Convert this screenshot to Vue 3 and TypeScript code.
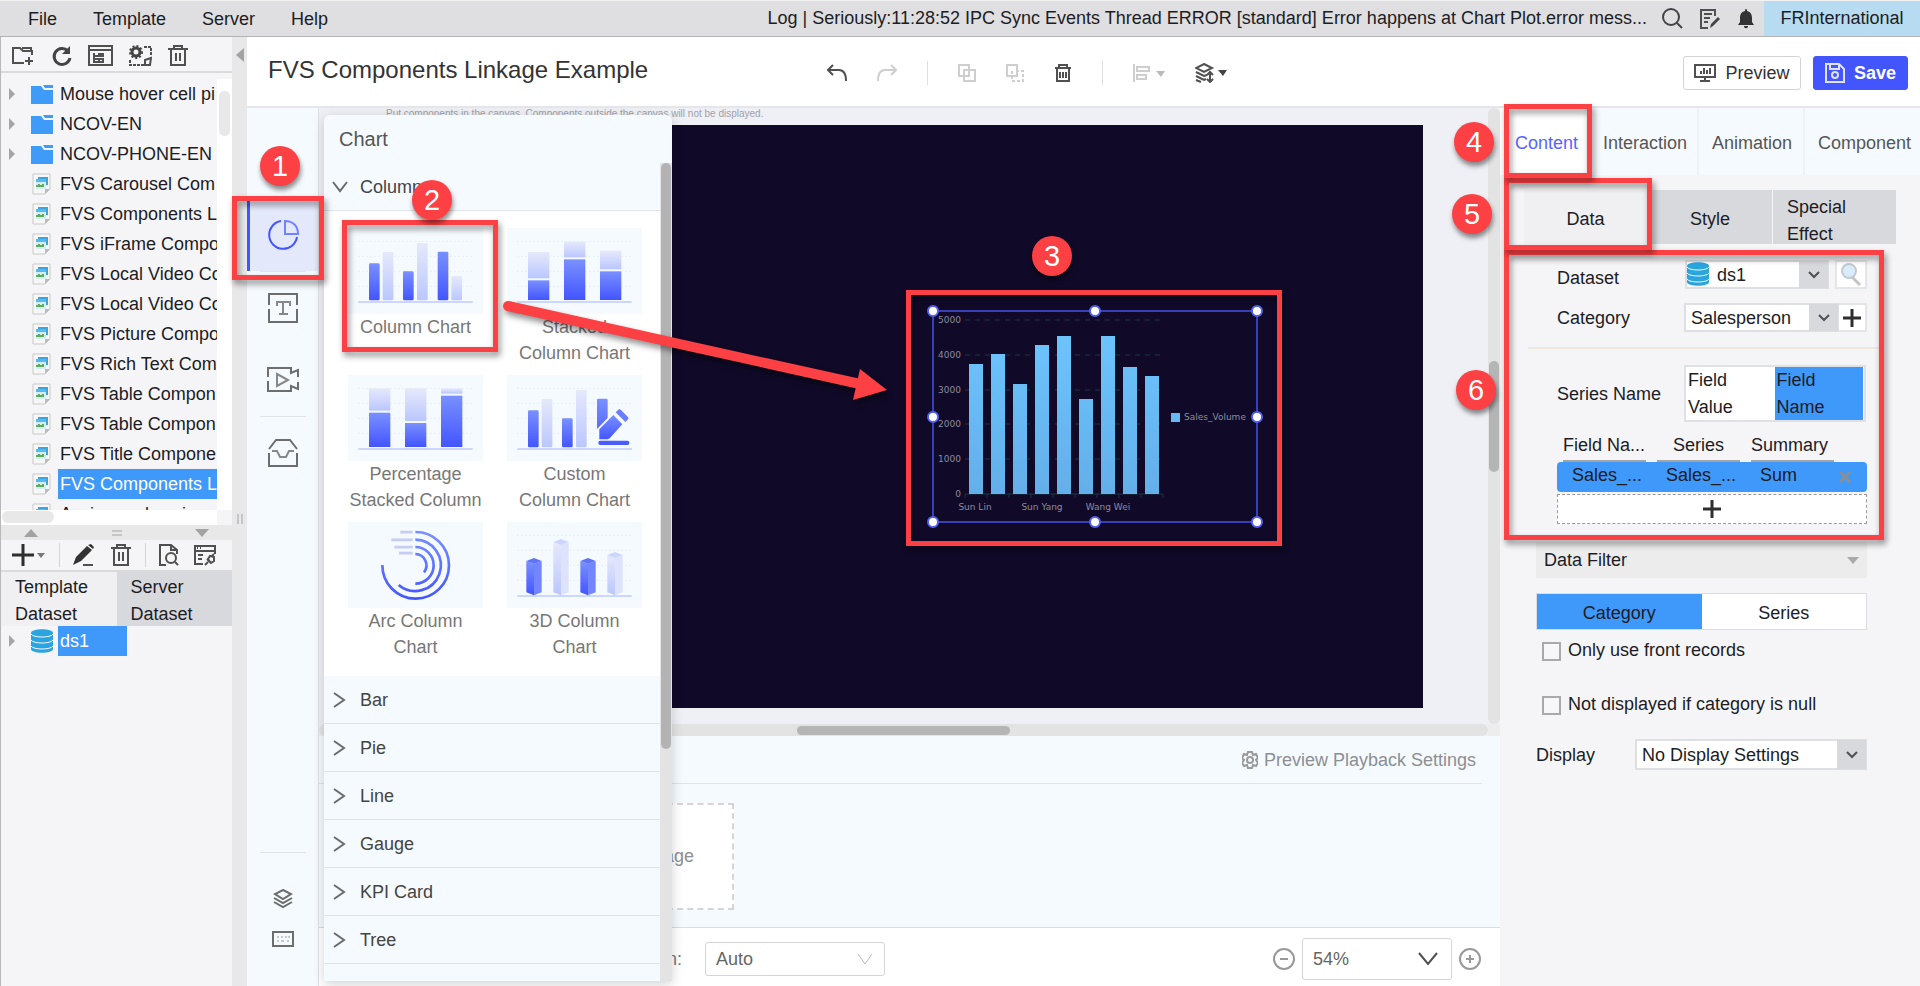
<script setup lang="ts">
import { ref } from 'vue'

const menus = ['File', 'Template', 'Server', 'Help']

interface TreeRow { label: string; folder?: boolean; active?: boolean }
const tree: TreeRow[] = [
  { label: 'Mouse hover cell pi', folder: true },
  { label: 'NCOV-EN', folder: true },
  { label: 'NCOV-PHONE-EN', folder: true },
  { label: 'FVS Carousel Com' },
  { label: 'FVS Components L' },
  { label: 'FVS iFrame Compo' },
  { label: 'FVS Local Video Co' },
  { label: 'FVS Local Video Co' },
  { label: 'FVS Picture Compo' },
  { label: 'FVS Rich Text Com' },
  { label: 'FVS Table Compon' },
  { label: 'FVS Table Compon' },
  { label: 'FVS Title Compone' },
  { label: 'FVS Components L', active: true },
  { label: 'Assign and assign' },
]

const groups = ['Bar', 'Pie', 'Line', 'Gauge', 'KPI Card', 'Tree']
const cards = [
  { id: 'column', label: 'Column Chart' },
  { id: 'stacked', label: 'Stacked\nColumn Chart' },
  { id: 'percent', label: 'Percentage\nStacked Column' },
  { id: 'custom', label: 'Custom\nColumn Chart' },
  { id: 'arc', label: 'Arc Column\nChart' },
  { id: 'solid', label: '3D Column\nChart' },
]

interface ThumbBar { x: number; y: number; h: number; w: number; light: boolean }
const single = (x: number, y: number, light: boolean): ThumbBar => ({ x, y, h: 217 - y, w: 32, light })
const stack = (x: number, top: number, split: number): ThumbBar[] => [
  { x, y: top, h: split - top, w: 64, light: true },
  { x, y: split + 6, h: 210 - split, w: 64, light: false },
]
const thumbBars: Record<string, ThumbBar[]> = {
  column: [single(63, 106, false), single(104, 72, true), single(165, 130, false), single(207, 45, true), single(269, 71, false), single(310, 144, true)],
  stacked: [...stack(63, 72, 151), ...stack(171, 41, 88), ...stack(279, 68, 124)],
  percent: [...stack(63, 40, 107), ...stack(171, 40, 138), ...stack(279, 40, 56)],
  custom: [single(63, 106, false), single(104, 72, true), single(165, 130, false), single(207, 45, true), single(270, 71, false)],
  arc: [],
  solid: [],
}
const prisms = [
  { x: 81, y: 108, light: false },
  { x: 162, y: 51, light: true },
  { x: 243, y: 108, light: false },
  { x: 324, y: 90, light: true },
]

const plotTop = 9
const plotBottom = 183
const yOf = (v: number) => Math.round(plotBottom - (v / 5000) * (plotBottom - plotTop))
const ticks = [0, 1000, 2000, 3000, 4000, 5000]
const sales = [3750, 4010, 3150, 4270, 4530, 2720, 4550, 3655, 3405]
const names = [
  { label: 'Sun Lin', x: 42 },
  { label: 'Sun Yang', x: 109 },
  { label: 'Wang Wei', x: 175 },
]
const handles = [[0, 0], [162, 0], [324, 0], [0, 106], [324, 106], [0, 211], [162, 211], [324, 211]]

const tabs = ['Content', 'Interaction', 'Animation', 'Component']
const subTabs = ['Data', 'Style', 'Special Effect']
const frontOnly = ref(false)
const hideNull = ref(false)
</script>

<template>
  <div class="app">
    <svg class="defs" width="0" height="0" aria-hidden="true">
      <defs>
        <linearGradient id="gDark" x1="0" y1="0" x2="0" y2="1"><stop offset="0" stop-color="#7a90ff" /><stop offset="1" stop-color="#4355ff" /></linearGradient>
        <linearGradient id="gLight" x1="0" y1="0" x2="0" y2="1"><stop offset="0" stop-color="#e6e9fa" /><stop offset="1" stop-color="#bac7ff" /></linearGradient>
        <linearGradient id="gArc" gradientUnits="userSpaceOnUse" x1="0" y1="28" x2="0" y2="232"><stop offset="0" stop-color="#7a90ff" /><stop offset="1" stop-color="#4355ff" /></linearGradient>
        <linearGradient id="gBar" gradientUnits="userSpaceOnUse" x1="0" y1="9" x2="0" y2="183"><stop offset="0" stop-color="#6dc6ff" /><stop offset="1" stop-color="#63afea" /></linearGradient>
      </defs>
    </svg>

    <header class="menubar">
      <nav class="menus"><button v-for="m in menus" :key="m" type="button">{{ m }}</button></nav>
      <p class="log">Log | Seriously:11:28:52 IPC Sync Events Thread ERROR [standard] Error happens at Chart Plot.error mess...</p>
      <div class="status">
        <button type="button" aria-label="Search"><svg width="22" height="22" viewBox="0 0 22 22"><circle cx="10" cy="9" r="8" class="s" /><path d="M16 15l5 5" class="s" /></svg></button>
        <button type="button" aria-label="Notes"><svg width="22" height="22" viewBox="0 0 22 22"><path d="M9 20H2V2h14v6M5 6h8M5 10h6M5 14h4" class="s2" /><path d="M11 20l1-4 7-7 2 2-7 7z" fill="#444" /></svg></button>
        <button type="button" aria-label="Alerts"><svg width="18" height="22" viewBox="0 0 18 22"><path d="M9 1c1 0 1 1 1 2 4 1 5 4 5 7v4l2 3H1l2-3v-4c0-3 1-6 5-7 0-1 0-2 1-2zM7 18h4c0 3-4 3-4 0z" fill="#333" /></svg></button>
      </div>
      <a class="user" href="#">FRInternational</a>
    </header>

    <div class="body">
      <aside class="side">
        <div class="tools top">
          <button type="button" aria-label="New folder"><svg width="24" height="24" viewBox="0 0 24 24"><path d="M14 20H3V5h7l3 3h9v4M12 5h9v3M15 18h8M19 14v8" class="s2" /></svg></button>
          <button type="button" aria-label="Refresh"><svg width="24" height="24" viewBox="0 0 24 24"><path d="M19 8a8 8 0 1 0 2 7" fill="none" stroke="#444" stroke-width="3" /><path d="M21 3v8h-8z" fill="#444" /></svg></button>
          <button type="button" aria-label="Template window"><svg width="25" height="24" viewBox="0 0 25 24"><path d="M1 3h23v19H1zM1 7h23M6 10v9h5M6 13h5M6 16h5M11 11h4v2h-4zM11 16h4v3h-4z" class="s2" /></svg></button>
          <button type="button" aria-label="Configure"><svg width="24" height="24" viewBox="0 0 24 24"><circle cx="8" cy="9" r="4" fill="none" stroke="#444" stroke-width="3" /><circle cx="8" cy="9" r="6" fill="none" stroke="#444" stroke-width="2" stroke-dasharray="2 2" /><path d="M16 4h7v9M2 17v5h14" class="s2" stroke-dasharray="3 1" /><path d="M17 17l6-2-1 7h-5z" class="s2" /></svg></button>
          <button type="button" aria-label="Delete"><svg width="22" height="24" viewBox="0 0 22 24"><path d="M1 6h20M7 6V3h8v3M4 6v16h14V6M9 10v8M13 10v8" class="s2" /></svg></button>
        </div>
        <div class="treebox">
          <ul class="tree">
            <li v-for="(row, i) in tree" :key="i" :class="{ active: row.active }">
              <span class="twist"><svg v-if="row.folder" width="8" height="12" viewBox="0 0 8 12"><path d="M1 0l6 6-6 6z" fill="#a5a5a5" /></svg></span>
              <svg v-if="row.folder" width="22" height="20" viewBox="0 0 22 20"><path d="M0 2h10l3 4h9v14H0zM12 1h10v3h-8z" fill="#3f9bf8" /></svg>
              <svg v-else width="22" height="22" viewBox="0 0 22 22"><path d="M2 1h17v15l-5 5H2z" fill="#f7f7f7" stroke="#c9c9c9" /><path d="M14 21v-5h5z" fill="#bbb" /><path d="M7 4h10v8H7z" fill="#35a5e5" /><path d="M5 6h10v10H5z" fill="#d4edf7" /><path d="M5 6h10v3H5z" fill="#58b9ea" /><path d="M6 14v-2M8 14v-3M10 14v-2M12 14v-3" stroke="#5dad59" stroke-width="2" /></svg>
              <span class="name">{{ row.label }}</span>
            </li>
          </ul>
          <div class="vtrack"><i></i></div>
        </div>
        <div class="htrack"><i></i></div>
        <div class="splitter">
          <svg width="14" height="8" viewBox="0 0 14 8"><path d="M0 8l7-8 7 8z" fill="#a2a2a2" /></svg>
          <svg width="10" height="6" viewBox="0 0 10 6"><path d="M0 1h10M0 5h10" stroke="#a2a2a2" /></svg>
          <svg width="14" height="8" viewBox="0 0 14 8"><path d="M0 0l7 8 7-8z" fill="#a2a2a2" /></svg>
        </div>
        <div class="tools mid">
          <button type="button" aria-label="Add dataset"><svg width="34" height="22" viewBox="0 0 34 22"><path d="M0 11h22M11 0v22" stroke="#2e2e2e" stroke-width="3" /><path d="M25 9h8l-4 5z" fill="#777" /></svg></button>
          <i class="sep"></i>
          <button type="button" aria-label="Edit"><svg width="22" height="22" viewBox="0 0 22 22"><path d="M0 21l3-8L14 2l5 4L8 17z M15 1l3-1 3 3-1 2z" fill="#333" /><path d="M10 21h10" class="s2" /></svg></button>
          <button type="button" aria-label="Delete dataset"><svg width="22" height="22" viewBox="0 0 22 22"><path d="M1 4h20M7 4V1h8v3M4 4v17h14V4M9 8v9M13 8v9" class="s2" /></svg></button>
          <i class="sep"></i>
          <button type="button" aria-label="Preview dataset"><svg width="20" height="22" viewBox="0 0 20 22"><path d="M7 21H1V1h11l6 5v4M12 1v5h6" class="s2" /><circle cx="12" cy="14" r="5" class="s2" /><path d="M16 18l3 3" class="s2" /></svg></button>
          <button type="button" aria-label="Connection"><svg width="22" height="22" viewBox="0 0 22 22"><path d="M9 20H1V2h20v8M1 7h20M3 4h1M6 4h1M4 11h5M4 15h4" class="s2" /><path d="M11 21l3-3M20 10l-2 2M13 15l4 4M14 15l2-3 4 1v4l-3 2z" class="s2" /></svg></button>
        </div>
        <div class="dtabs">
          <button type="button" class="on">Template Dataset</button>
          <button type="button">Server Dataset</button>
        </div>
        <ul class="tree data">
          <li class="active">
            <span class="twist"><svg width="8" height="12" viewBox="0 0 8 12"><path d="M1 0l6 6-6 6z" fill="#a5a5a5" /></svg></span>
            <svg width="22" height="24" viewBox="0 0 22 24"><path d="M0 4c0-5 22-5 22 0v16c0 5-22 5-22 0z" fill="#2ba5e0" /><path d="M0 5c2 4 20 4 22 0M0 11c2 4 20 4 22 0M0 17c2 4 20 4 22 0" fill="none" stroke="#f4f8fb" stroke-width="1" /></svg>
            <span class="name">ds1</span>
          </li>
        </ul>
      </aside>

      <div class="vsplit">
        <svg width="8" height="14" viewBox="0 0 8 14"><path d="M8 0v14L0 7z" fill="#a2a2a2" /></svg>
        <svg width="6" height="10" viewBox="0 0 6 10"><path d="M1 0v10M5 0v10" stroke="#a2a2a2" /></svg>
      </div>

      <main class="main">
        <div class="titlebar">
          <h1>FVS Components Linkage Example</h1>
          <div class="acts">
            <button type="button" aria-label="Undo"><svg width="20" height="18" viewBox="0 0 20 18"><path d="M6 1L1 6l5 5M1 6h11c5 0 7 4 7 11" class="s2" /></svg></button>
            <button type="button" aria-label="Redo"><svg width="20" height="18" viewBox="0 0 20 18"><path d="M14 1l5 5-5 5M19 6H8C3 6 1 10 1 17" class="f" /></svg></button>
            <i class="sep"></i>
            <button type="button" aria-label="Group"><svg width="18" height="18" viewBox="0 0 18 18"><path d="M1 1h10v11H1zM6 6h11v11H6z" class="f" /></svg></button>
            <button type="button" aria-label="Ungroup"><svg width="18" height="18" viewBox="0 0 18 18"><path d="M1 1h10v11H1z" class="f" /><path d="M6 7v10h11V7h-5" class="f" stroke-dasharray="3 2" /></svg></button>
            <button type="button" aria-label="Delete component"><svg width="18" height="18" viewBox="0 0 18 18"><path d="M1 4h16M5 4V1h8v3M3 4v13h12V4M6 8v6M9 8v6M12 8v6" class="s2" /></svg></button>
            <i class="sep"></i>
            <button type="button" aria-label="Align"><svg width="32" height="18" viewBox="0 0 32 18"><path d="M1 0v18M4 3h12v4H4zM4 11h9v4H4z" class="f" /><path d="M23 7h9l-4 6z" fill="#bbb" /></svg></button>
            <button type="button" aria-label="Layer order"><svg width="32" height="20" viewBox="0 0 32 20"><path d="M9 1l8 4-8 4-8-4zM1 9l8 4 3-1M1 13l8 4 2-1M1 17l5 2M15 9v10M12 12l3-3 3 3M12 16l3 3 3-3" class="s2" /><path d="M23 7h9l-4 6z" fill="#444" /></svg></button>
          </div>
          <div class="cta">
            <button type="button" class="preview"><svg width="22" height="18" viewBox="0 0 22 18"><path d="M1 1h20v12H1zM11 13v4M6 17h10M7 10V7M10 10V4M13 10V6M16 10V4" class="s2" /></svg>Preview</button>
            <button type="button" class="save"><svg width="20" height="20" viewBox="0 0 20 20"><path d="M1 1h13l5 5v13H1zM5 1v5h9V1" fill="none" stroke="#dfe2ff" stroke-width="2" /><circle cx="10" cy="12" r="3" fill="none" stroke="#dfe2ff" stroke-width="2" /></svg>Save</button>
          </div>
        </div>

        <div class="editor">
          <nav class="rail">
            <button type="button" class="on" aria-label="Charts"><svg width="32" height="32" viewBox="0 0 32 32"><path d="M13 2a14 14 0 1 0 16 16" fill="none" stroke="#4355ff" stroke-width="2" /><path d="M17 2v13h13C30 7 25 2 17 2z" fill="none" stroke="#7383ff" stroke-width="2" /></svg></button>
            <i class="line"></i>
            <button type="button" aria-label="Text"><svg width="30" height="30" viewBox="0 0 30 30"><path d="M1 12V1h28v11M1 16v13h28V16" class="r" /><path d="M9 13V9h13v4M15 9v12M11 21h9" fill="none" stroke="#888" stroke-width="2" /></svg></button>
            <button type="button" aria-label="Media"><svg width="32" height="26" viewBox="0 0 32 26"><path d="M1 10V1h23v5l7-3v7M1 14v10h23v-5l7 3v-7" class="r" /><path d="M10 7l11 6-11 6z" fill="none" stroke="#888" stroke-width="2" /></svg></button>
            <i class="line"></i>
            <button type="button" aria-label="Inbox"><svg width="30" height="28" viewBox="0 0 30 28"><path d="M1 10l7-9h14l7 9M1 14v13h28V14" class="r" /><path d="M4 12h5l3 6h6l3-6h5" fill="none" stroke="#888" stroke-width="2" /></svg></button>
            <div class="grow"></div>
            <i class="line"></i>
            <button type="button" class="small first" aria-label="Layers"><svg width="20" height="20" viewBox="0 0 20 20"><path d="M10 1l8 4-8 5-8-5zM1 9l9 5 9-5M1 13l9 5 9-5" class="r" /></svg></button>
            <button type="button" class="small" aria-label="Shortcuts"><svg width="22" height="16" viewBox="0 0 22 16"><path d="M1 1h20v14H1z" class="r" /><path d="M6 5v2M10 5v2M14 5v2M17 5v2M6 9v2M9 10h3M16 9v2" fill="none" stroke="#999" stroke-width="1" /></svg></button>
          </nav>

          <section class="center">
            <div class="stage">
              <div class="view">
                <p class="hint">Put components in the canvas. Components outside the canvas will not be displayed.</p>
                <div class="board">
                  <div class="frame chartframe"></div>
                  <span class="badge b3">3</span>
                  <svg class="chart" width="324" height="211" viewBox="0 0 324 211">
                    <rect x="0" y="0" width="324" height="211" fill="none" stroke="#3840b8" stroke-width="2" />
                    <g v-for="t in ticks" :key="t">
                      <path :d="`M32 ${yOf(t)}H230`" stroke="#1b3443" :stroke-dasharray="t ? '5 5' : ''" />
                      <text x="28" :y="yOf(t) + 3" text-anchor="end">{{ t }}</text>
                    </g>
                    <path v-for="n in 10" :key="n" :d="`M${10 + n * 22} 183v4`" stroke="#1b3443" />
                    <rect v-for="(s, i) in sales" :key="i" :x="36 + i * 22" :y="yOf(s)" width="14" :height="plotBottom - yOf(s)" fill="url(#gBar)" />
                    <text v-for="n in names" :key="n.label" :x="n.x" y="199" text-anchor="middle">{{ n.label }}</text>
                    <rect x="238" y="102" width="9" height="9" fill="#67b9f4" />
                    <text x="251" y="109">Sales_Volume</text>
                    <circle v-for="(h, i) in handles" :key="i" :cx="h[0]" :cy="h[1]" r="5" fill="#fff" stroke="#5561f0" stroke-width="2" />
                  </svg>
                </div>
              </div>
              <div class="vscroll"><i></i></div>
              <div class="hscroll"><i></i></div>
              <div class="corner"></div>
            </div>
            <div class="timeline">
              <div class="thead"><button type="button"><svg width="16" height="18" viewBox="0 0 16 18"><path d="M6 1h4l1 3 3-1 2 4-2 2 2 3-2 3-3-1-1 3H6l-1-3-3 1-2-3 2-3-2-2 2-4 3 1z" class="g" /><circle cx="8" cy="9" r="3" class="g" /></svg>Preview Playback Settings</button></div>
              <div class="pages"><div class="page">Page</div></div>
            </div>
            <footer class="foot">
              <label for="anim">n:</label>
              <span class="sel auto"><select id="anim"><option>Auto</option></select><svg width="16" height="12" viewBox="0 0 16 12"><path d="M1 1l7 10 7-10" fill="none" stroke="#bbb" stroke-width="1" /></svg></span>
              <div class="zoom">
                <button type="button" aria-label="Zoom out"><svg width="22" height="22" viewBox="0 0 22 22"><circle cx="11" cy="11" r="10" class="g" /><path d="M7 11h8" class="g" /></svg></button>
                <span class="sel pct"><select aria-label="Zoom level"><option>54%</option></select><svg width="20" height="14" viewBox="0 0 20 14"><path d="M1 1l9 11 9-11" class="s2" /></svg></span>
                <button type="button" aria-label="Zoom in"><svg width="22" height="22" viewBox="0 0 22 22"><circle cx="11" cy="11" r="10" class="g" /><path d="M7 11h8M11 7v8" class="g" /></svg></button>
              </div>
            </footer>
          </section>

          <section class="popup">
            <h2>Chart</h2>
            <div class="pscroll">
              <div class="plist">
                <button type="button" class="group"><svg width="16" height="12" viewBox="0 0 16 12"><path d="M1 1l7 9 7-9" class="c" /></svg>Column</button>
                <div class="cards">
                  <button v-for="c in cards" :key="c.id" type="button" class="card">
                    <svg width="135" height="86" viewBox="0 0 405 258">
                      <rect width="405" height="258" fill="#f5fafe" />
                      <template v-if="c.id !== 'arc'">
                        <path d="M30 40H376M30 85H376M30 130H376M30 175H376" stroke="#e9eef4" stroke-width="3" stroke-dasharray="6 6" />
                        <path d="M31 222H374" stroke="#cdd6fc" stroke-width="6" />
                      </template>
                      <rect v-for="(b, i) in thumbBars[c.id]" :key="i" :x="b.x" :y="b.y" :width="b.w" :height="b.h" :rx="b.w < 40 ? 4 : 0" :fill="b.light ? 'url(#gLight)' : 'url(#gDark)'" />
                      <template v-if="c.id === 'custom'">
                        <path d="M268 164l52-54 54-10v119H268z" fill="#f5fafe" />
                        <path d="M262 222H374" stroke="#cdd6fc" stroke-width="6" />
                        <path d="M277 163l42-43 27 28-38 42-6 3h-25z" fill="url(#gDark)" />
                        <path d="M326 112l8-8c3-2 5-2 8 1l20 20c3 3 3 5 1 8l-8 8z" fill="#6a7eff" />
                        <rect x="274" y="197" width="93" height="13" rx="6" fill="#4a5cff" />
                      </template>
                      <g v-if="c.id === 'arc'" fill="none" stroke="url(#gArc)" stroke-width="8">
                        <path d="M202 30a100 100 0 1 1-99 99" />
                        <path d="M202 53a77 77 0 1 1-50 136" />
                        <path d="M202 75a55 55 0 0 1 0 110" />
                        <path d="M202 96a34 34 0 0 1 26 55" />
                        <path d="M157 30.5h37M130 53.5h64M139 75.5h55M153 93.5h41" stroke="#c5cef0" />
                      </g>
                      <template v-if="c.id === 'solid'">
                        <g v-for="p in prisms" :key="p.x">
                          <path :d="`M${p.x - 23} ${p.y + 9}l23 9V220l-23 -9z`" :fill="p.light ? 'url(#gLight)' : 'url(#gDark)'" />
                          <path :d="`M${p.x + 23} ${p.y + 9}l-23 9V220l23 -9z`" :fill="p.light ? '#dde3fc' : '#7385ff'" />
                          <path :d="`M${p.x - 23} ${p.y + 9}l23 -9l23 9l-23 9z`" :fill="p.light ? '#ccd5fc' : '#6073fb'" />
                        </g>
                      </template>
                    </svg>
                    <span>{{ c.label }}</span>
                  </button>
                </div>
                <button v-for="g in groups" :key="g" type="button" class="group"><svg width="16" height="16" viewBox="0 0 16 16"><path d="M2 1l10 7-10 7" class="c" /></svg>{{ g }}</button>
              </div>
              <div class="pbar"><i></i></div>
            </div>
          </section>

          <div class="frame f1"></div>
          <div class="frame f2"></div>
          <svg class="arrow" width="400" height="130" viewBox="0 0 400 130"><path d="M18 22L370 100" stroke="#fd4043" stroke-width="10" stroke-linecap="round" /><path d="M370 85L397 106L363 116z" fill="#fd4043" /></svg>
          <span class="badge b1">1</span>
          <span class="badge b2">2</span>

          <aside class="props">
            <div class="tabs"><button v-for="(t, i) in tabs" :key="t" type="button" :class="{ on: i === 0 }">{{ t }}</button></div>
            <div class="subtabs"><button v-for="(t, i) in subTabs" :key="t" type="button" :class="{ on: i === 0 }">{{ t }}</button></div>
            <div class="form">
              <div class="row dataset">
                <label for="ds">Dataset</label>
                <span class="combo ds"><svg class="dbi" width="22" height="24" viewBox="0 0 22 24"><path d="M0 4c0-5 22-5 22 0v16c0 5-22 5-22 0z" fill="#2ba5e0" /><path d="M0 5c2 4 20 4 22 0M0 11c2 4 20 4 22 0M0 17c2 4 20 4 22 0" fill="none" stroke="#f4f8fb" /></svg><select id="ds"><option>ds1</option></select><i class="dd"><svg width="12" height="8" viewBox="0 0 12 8"><path d="M1 1l5 5 5-5" class="s2" /></svg></i></span>
                <button type="button" class="sq gap" aria-label="Find dataset"><svg width="22" height="24" viewBox="0 0 22 24"><path d="M12 14l8 8" stroke="#c4c4c4" stroke-width="3" /><circle cx="9" cy="8" r="7" fill="#d9ecfb" stroke="#c3cad2" stroke-width="2" /></svg></button>
              </div>
              <div class="row second">
                <label for="cat">Category</label>
                <span class="combo cat"><select id="cat"><option>Salesperson</option></select><i class="dd"><svg width="12" height="8" viewBox="0 0 12 8"><path d="M1 1l5 5 5-5" class="s2" /></svg></i></span>
                <button type="button" class="sq" aria-label="Add category"><svg width="18" height="18" viewBox="0 0 18 18"><path d="M0 9h18M9 0v18" stroke="#2e2e2e" stroke-width="3" /></svg></button>
              </div>
              <hr />
              <div class="row series">
                <span class="lbl">Series Name</span>
                <div class="toggle"><button type="button">Field Value</button><button type="button" class="on">Field Name</button></div>
              </div>
              <table>
                <thead><tr><th><span>Field Na...</span></th><th><span class="mid">Series</span></th><th><span>Summary</span></th><th class="end"></th></tr></thead>
                <tbody><tr><td>Sales_...</td><td>Sales_...</td><td>Sum</td><td class="end"><button type="button" aria-label="Remove"><svg width="12" height="12" viewBox="0 0 12 12"><path d="M1 1l10 10M11 1L1 11" stroke="#8b8f93" stroke-width="3" /></svg></button></td></tr></tbody>
              </table>
              <button type="button" class="addrow" aria-label="Add field"><svg width="18" height="18" viewBox="0 0 18 18"><path d="M0 9h18M9 0v18" stroke="#2e2e2e" stroke-width="3" /></svg></button>
            </div>
            <div class="filter">
              <button type="button" class="fhead">Data Filter<svg width="12" height="7" viewBox="0 0 12 7"><path d="M0 0h12L6 7z" fill="#aaa" /></svg></button>
              <div class="seg"><button type="button" class="on">Category</button><button type="button">Series</button></div>
              <label class="chk"><input v-model="frontOnly" type="checkbox" />Only use front records</label>
              <label class="chk"><input v-model="hideNull" type="checkbox" />Not displayed if category is null</label>
              <div class="row disp">
                <label for="disp">Display</label>
                <span class="combo dis"><select id="disp"><option>No Display Settings</option></select><i class="dd"><svg width="12" height="8" viewBox="0 0 12 8"><path d="M1 1l5 5 5-5" class="s2" /></svg></i></span>
              </div>
            </div>
            <div class="frame f6"></div>
            <div class="frame f5"></div>
            <div class="frame f4"></div>
            <span class="badge b4">4</span>
            <span class="badge b5">5</span>
            <span class="badge b6">6</span>
          </aside>
        </div>
      </main>
    </div>
  </div>
</template>

<style>
body { margin: 0; }
</style>

<style scoped>
* { box-sizing: border-box; }
.app { min-height: 100vh; display: flex; flex-direction: column; font: 18px/26px "Liberation Sans", Arial, sans-serif; color: #1c1c24; background: #f5f5f7; overflow: hidden; }
.defs { position: absolute; }
button { font: inherit; color: inherit; background: none; border: 0; padding: 0; margin: 0; }
svg { display: block; flex: none; }
ul, p, h1, h2 { margin: 0; padding: 0; list-style: none; font-weight: normal; }
select { font: inherit; color: inherit; appearance: none; border: 0; background: transparent; flex: 1; min-width: 0; height: 100%; padding: 0 0 0 5px; }
.s { fill: none; stroke: #444; stroke-width: 2; }
.s2 { fill: none; stroke: #505050; stroke-width: 2; }
.f { fill: none; stroke: #cecece; stroke-width: 2; }
.r { fill: none; stroke: #6d6d6d; stroke-width: 2; }
.g { fill: none; stroke: #999; stroke-width: 2; }
.c { fill: none; stroke: #6a6a6a; stroke-width: 2; }

.menubar { display: flex; align-items: stretch; height: 37px; background: #dfdfe1; border-top: 1px solid #f2f2f2; border-bottom: 1px solid #b2b2b4; }
.menus { display: flex; gap: 36px; padding-left: 28px; }
.log { flex: 1; min-width: 0; text-align: right; white-space: nowrap; overflow: hidden; line-height: 35px; }
.status { display: flex; align-items: center; gap: 16px; padding: 0 9px 0 14px; }
.user { width: 156px; text-align: center; line-height: 35px; background: #b7dcf2; color: inherit; text-decoration: none; }

.body { flex: 1; display: flex; }
.side { width: 232px; flex: none; border-left: 1px solid #b8b8ba; background: #f5f5f7; }
.tools { display: flex; align-items: center; border-bottom: 2px solid #dadadc; }
.tools.top { height: 36px; gap: 15px; padding: 2px 0 0 9px; }
.treebox { display: flex; height: 437px; padding-top: 6px; }
.tree { flex: 1; min-width: 0; overflow: hidden; }
.tree li { display: flex; align-items: center; height: 30px; }
.twist { width: 30px; padding-left: 7px; flex: none; }
.name { margin-left: 5px; padding-left: 2px; flex: 1; white-space: nowrap; overflow: hidden; line-height: 30px; }
.active .name { background: #3f99fb; color: #fff; }
.data .name { flex: none; width: 69px; }
.vtrack { width: 15px; background: #fff; padding: 12px 2px; }
.vtrack i { display: block; height: 45px; border-radius: 5px; background: #e8e8e8; }
.htrack { height: 15px; width: 216px; background: #fff; padding: 1px; }
.htrack i { display: block; width: 52px; height: 12px; border-radius: 6px; background: #e8e8e8; }
.splitter { height: 15px; background: #e8e8e8; display: flex; align-items: center; justify-content: space-between; padding: 0 23px; }
.tools.mid { height: 32px; padding-left: 11px; gap: 13px; }
.tools .sep { width: 1px; height: 24px; background: #d5d5d7; }
.tools.mid button + button { margin-left: 2px; }
.dtabs { display: flex; }
.dtabs button { flex: 1; height: 54px; line-height: 27px; text-align: left; padding: 2px 14px 0; background: #d8d9dc; }
.dtabs .on { background: #f0f0f2; }
.vsplit { width: 15px; flex: none; background: #e8e8e8; display: flex; flex-direction: column; align-items: center; padding-top: 11px; gap: 452px; }

.main { flex: 1; min-width: 0; display: flex; flex-direction: column; }
.titlebar { height: 71px; background: #fff; display: flex; align-items: flex-start; padding: 19px 12px 0 21px; border-bottom: 2px solid #e6e6ea; }
h1 { font-size: 24px; line-height: 28px; width: 559px; color: #333; }
.acts { display: flex; align-items: center; height: 34px; gap: 30px; flex: 1; }
.acts .sep { width: 1px; height: 24px; background: #dedede; }
.cta { display: flex; gap: 12px; }
.preview, .save { height: 34px; border: 1px solid #d3d3d6; border-radius: 3px; display: flex; align-items: center; justify-content: center; gap: 9px; color: #333; }
.preview { width: 118px; }
.save { width: 95px; background: #4355ff; border-color: #4355ff; color: #fff; font-weight: bold; }

.editor { flex: 1; display: flex; position: relative; }
.rail { width: 71px; flex: none; background: #f5fafe; display: flex; flex-direction: column; align-items: center; padding: 91px 0 27px; }
.rail button { width: 100%; height: 72px; display: flex; align-items: center; justify-content: center; }
.rail .on { background: #e4e8fb; border-left: 3px solid #4355ff; }
.rail .line { width: 46px; height: 1px; background: #dfe3e8; }
.rail .small { height: 40px; }
.rail .first { margin-top: 26px; }
.grow { flex: 1; }
.center { flex: 1; min-width: 0; display: flex; flex-direction: column; border-left: 1px solid #e0e0e4; }
.stage { flex: 1; display: grid; grid-template-columns: 1fr 12px; grid-template-rows: 1fr 12px; background: #eff0f5; }
.view { display: flex; flex-direction: column; padding: 0 65px 16px 67px; }
.hint { font-size: 10px; line-height: 12px; height: 17px; color: #a0a0a6; white-space: nowrap; }
.board { flex: 1; position: relative; background: #100a28; }
.chart { position: absolute; left: 547px; top: 186px; overflow: visible; }
.chart text { font: 9px "DejaVu Sans", sans-serif; fill: #8d8b9c; }
.vscroll { background: #e3e3e3; border-radius: 6px; padding: 253px 1px 0; }
.vscroll i { display: block; height: 111px; border-radius: 5px; background: #b5b5b5; }
.hscroll { background: #e3e3e3; border-radius: 6px; padding: 2px 0 0 478px; }
.hscroll i { display: block; width: 213px; height: 9px; border-radius: 5px; background: #b5b5b5; }
.corner { background: #ededed; }
.timeline { height: 191px; background: #f5fafe; padding-right: 18px; }
.thead { height: 48px; border-bottom: 1px solid #dfe4e8; display: flex; justify-content: flex-end; align-items: center; padding-right: 6px; }
.thead button { display: flex; align-items: center; gap: 6px; color: #8c8f93; }
.pages { padding: 19px 0 0 246px; }
.page { width: 169px; height: 107px; border: 2px dashed #d5d5d8; background: #fff; color: #8c8f93; text-align: right; padding-right: 38px; line-height: 103px; }
.foot { height: 59px; background: #fff; border-top: 1px solid #dcdde2; display: flex; align-items: center; padding: 3px 19px 0 348px; color: #777; }
.sel { display: flex; align-items: center; border: 1px solid #d5d5d8; border-radius: 3px; background: #fff; }
.auto { width: 180px; height: 34px; margin-left: 23px; padding: 0 11px 0 5px; color: #666; }
.zoom { margin-left: auto; display: flex; align-items: center; gap: 7px; }
.pct { width: 150px; height: 42px; padding: 0 13px 0 5px; color: #666; }

.popup { position: absolute; left: 77px; top: 7px; bottom: 5px; width: 348px; border-radius: 6px 6px 0 0; background: #f5fafe; box-shadow: 0 3px 12px rgba(0, 0, 0, 0.18); display: flex; flex-direction: column; }
h2 { font-size: 20px; line-height: 48px; padding-left: 15px; color: #555; }
.pscroll { flex: 1; min-height: 0; display: flex; }
.plist { flex: 1; min-width: 0; overflow: hidden; }
.group { width: 100%; height: 48px; border-bottom: 1px solid #e0e4e8; display: flex; align-items: center; gap: 12px; padding: 0 8px; color: #444; }
.cards { background: #fff; display: grid; grid-template-columns: 135px 135px; column-gap: 24px; padding: 17px 0 7px 24px; }
.card { display: flex; flex-direction: column; align-items: center; justify-content: flex-start; height: 147px; line-height: 26px; color: #777; }
.card span { white-space: pre-line; }
.pbar { width: 12px; background: #e3e3e3; padding: 0 1px; }
.pbar i { display: block; height: 586px; border-radius: 5px; background: #b3b3b3; }

.frame { position: absolute; border: 5px solid #fd4043; filter: drop-shadow(2px 4px 3px rgba(0, 0, 0, 0.45)); pointer-events: none; }
.badge { position: absolute; width: 40px; height: 40px; border-radius: 20px; background: #fd4043; color: #fff; font-size: 29px; line-height: 40px; text-align: center; box-shadow: 1px 4px 5px rgba(0, 0, 0, 0.45); }
.f1 { left: -15px; top: 88px; width: 92px; height: 84px; }
.f2 { left: 95px; top: 112px; width: 156px; height: 132px; }
.b1 { left: 13px; top: 38px; }
.b2 { left: 165px; top: 72px; }
.arrow { position: absolute; left: 243px; top: 176px; filter: drop-shadow(2px 4px 3px rgba(0, 0, 0, 0.45)); pointer-events: none; }
.chartframe { left: 520px; top: 165px; width: 376px; height: 256px; }
.b3 { left: 646px; top: 111px; }
.f4 { left: 4px; top: -4px; width: 88px; height: 74px; }
.f5 { left: 4px; top: 70px; width: 148px; height: 72px; }
.f6 { left: 4px; top: 142px; width: 380px; height: 290px; }
.b4 { left: -46px; top: 14px; }
.b5 { left: -48px; top: 86px; }
.b6 { left: -44px; top: 262px; }

.props { width: 420px; flex: none; position: relative; background: #f5f5f7; }
.tabs { display: grid; grid-template-columns: 91px 108px 106px 1fr; height: 67px; }
.tabs button { background: #f5fafe; border-right: 2px solid #eef1f5; color: #555; padding: 2px 0 0 2px; }
.tabs button:last-child { border: 0; padding-left: 4px; }
.tabs .on { background: #fff; color: #5664ff; border: 0; }
.subtabs { display: grid; grid-template-columns: 126px 121px 123px; gap: 1px; padding: 15px 24px 0; }
.subtabs button { height: 54px; line-height: 27px; background: #d8d9dc; padding: 4px 17px 0 14px; }
.subtabs button:last-child { text-align: left; padding-right: 40px; }
.subtabs .on { background: #f0f0f2; }
.form { padding: 16px 53px 0 57px; }
.row { display: flex; align-items: center; }
.row label, .row .lbl { flex: 1; white-space: nowrap; }
.dataset label { padding-top: 8px; line-height: 21px; }
.row.second { margin-top: 14px; }
.combo { display: flex; height: 29px; border: 2px solid #dedfe2; background: #fff; align-items: stretch; }
.combo select { height: 25px; }
.ds { width: 144px; }
.ds select { padding-left: 8px; }
.cat { width: 155px; }
.dd { width: 29px; margin: -1px; background: #d8d9dc; display: flex; align-items: center; justify-content: center; }
.sq { width: 28px; height: 29px; border: 2px solid #e4e5e8; border-left: 0; background: #fff; display: flex; align-items: center; justify-content: center; }
.sq.gap { width: 32px; margin-left: 6px; border-left: 2px solid #e4e5e8; }
hr { border: 0; height: 2px; background: #eee9dc; margin: 15px -12px 16px -29px; }
.toggle { width: 182px; height: 57px; display: flex; border: 2px solid #e0e1e4; background: #fff; padding-right: 1px; margin-right: 1px; }
.toggle button { flex: 1; text-align: left; line-height: 27px; padding: 0 30px 0 2px; }
.toggle .on, .seg .on { background: #3f99fb; }
table { width: 100%; border-spacing: 0; table-layout: fixed; margin-top: 9px; }
th { font-weight: normal; text-align: left; padding: 0 5px 0 6px; height: 31px; }
th span { display: block; border-bottom: 2px solid #a4a4a6; line-height: 29px; white-space: nowrap; }
th .mid { text-align: center; }
.end { width: 28px; }
th.end { padding: 0; }
td { background: #3f99fb; height: 30px; padding: 0 0 4px 15px; }
td:first-child { border-radius: 4px 0 0 4px; }
td:last-child { border-radius: 0 4px 4px 0; padding: 0; }
.addrow { width: 100%; height: 30px; margin-top: 2px; border: 1px dashed #999; background: #fff; display: flex; align-items: center; justify-content: center; }
.filter { padding: 18px 53px 0 36px; }
.fhead { width: 100%; height: 36px; background: #ececed; display: flex; align-items: center; justify-content: space-between; padding: 0 8px; }
.seg { display: flex; height: 37px; margin: 15px 0 7px; border: 1px solid #dcdde2; background: #fff; }
.seg button { flex: 1; padding-top: 2px; }
.chk { display: flex; align-items: center; height: 26px; margin: 0 0 28px 6px; gap: 7px; white-space: nowrap; }
.chk input { appearance: none; width: 19px; height: 19px; margin: 2px 0 0; border: 2px solid #a9a9ab; background: #f7f7f9; }
.disp { margin-top: -6px; }
.dis { width: 232px; height: 31px; }
.dis select { height: 27px; }
</style>
